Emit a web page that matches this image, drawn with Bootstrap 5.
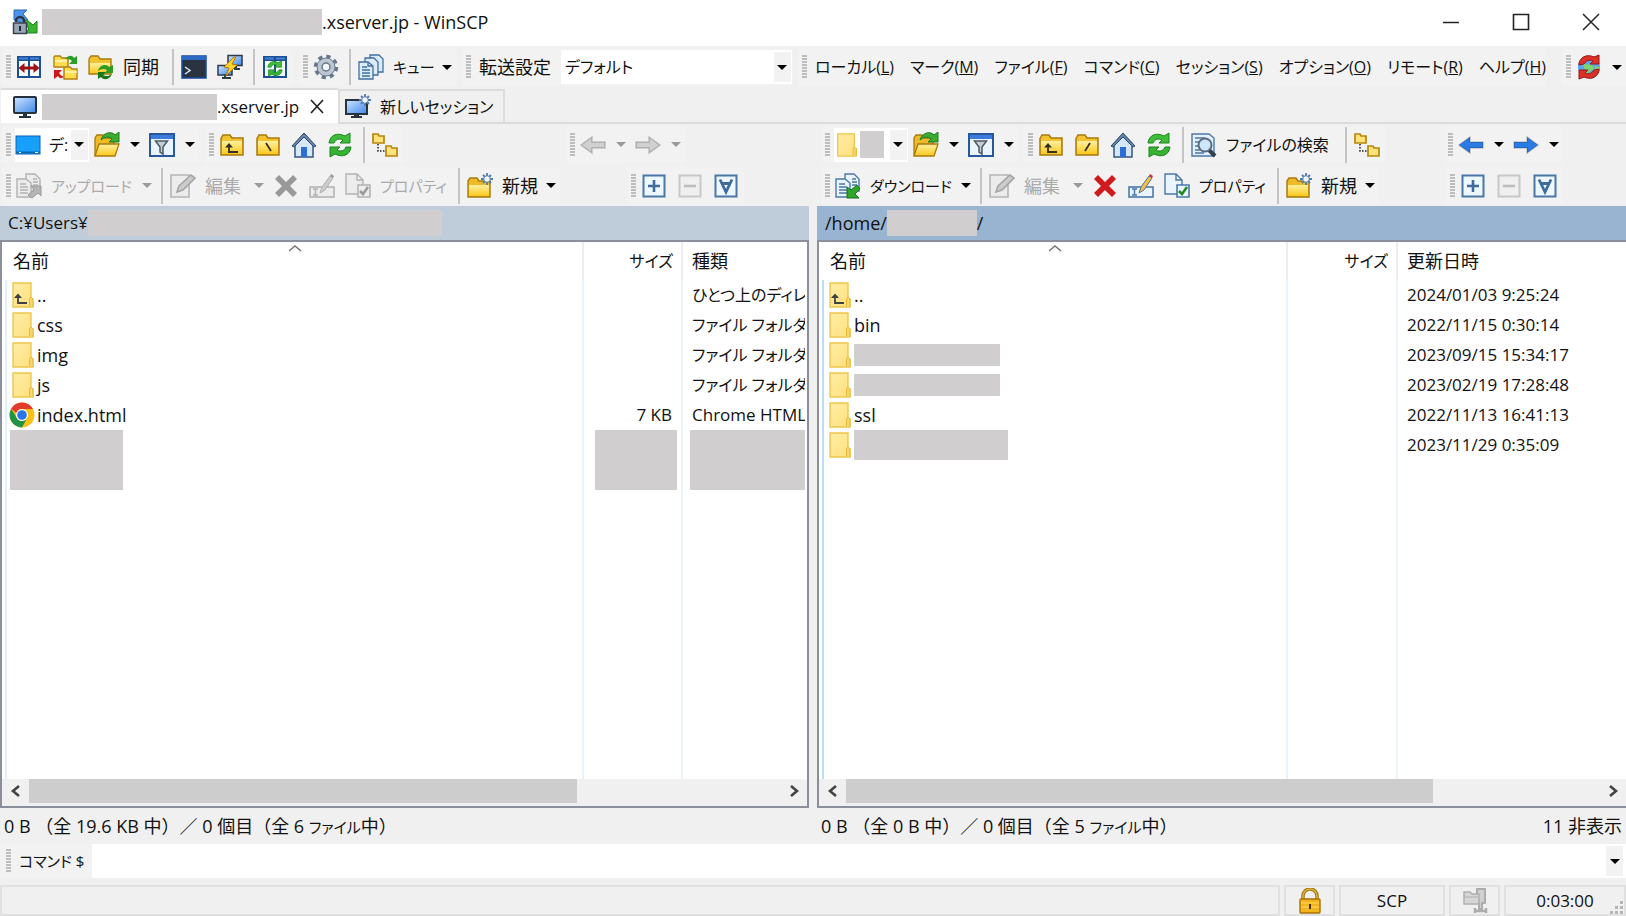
<!DOCTYPE html>
<html lang="ja">
<head>
<meta charset="utf-8">
<meta name="viewport" content="width=device-width, initial-scale=1">
<title>WinSCP</title>
<link href="https://cdn.jsdelivr.net/npm/bootstrap@5.3.0/dist/css/bootstrap.min.css" rel="stylesheet">
<style>
body{font-family:"Open Sans","Noto Sans CJK JP",sans-serif;font-size:17px;line-height:24px;color:#111;background:#f0f0f0;font-feature-settings:"palt"}
button,select,input{font:inherit;font-feature-settings:inherit;color:inherit;background:none;border:0;padding:0;margin:0;border-radius:0}
svg{display:block;flex:none}
a{color:inherit;text-decoration:none}
.ico{width:26px;height:26px}
.kana,.files th.kana{font-size:16px}
.kana-s{font-size:15px;font-feature-settings:"palt"}
.kanji{font-size:18px}
.redact{background:#d0cece;flex:none}
.titlebar{height:44px;margin-bottom:2px;background:#fff;padding-left:12px;gap:4px;font-size:18px;box-shadow:0 2px #fff}
.titlebar .redact{width:280px;height:26px}
.winbtn{width:70px;height:44px}
.toolrow{height:42px}
.bar{height:37px;background:#f2f2f2;padding-left:4px}
.first{margin-left:2px}
.grip{width:5px;height:24px;flex:none;background:repeating-linear-gradient(#bdbdbd 0 2px,#f2f2f2 2px 3px)}
.tb{width:36px;height:34px;flex:none;display:flex;align-items:center;justify-content:center}
.lab{display:flex;align-items:center;white-space:nowrap;height:34px;flex:none}
.lab:disabled,.tb:disabled{color:#aaa}
.w-s{width:48px}.w-n{width:43px}.w-m{width:77px}.w-l{width:90px}.w-xl{width:118px}
.pad{padding-left:4px}
.cv{width:19px;height:34px;flex:none;display:flex;align-items:center;justify-content:center}
.cv::after,.pick::after{content:"";border:5px solid transparent;border-top:5px solid #000;border-bottom:0}
.cv:disabled::after{border-top-color:#999}
.rule{width:2px;height:36px;background:#c4c4c4;margin:0 2px 0 5px;flex:none}
.pick{display:flex;align-items:center;background:linear-gradient(#f2f2f2,#f2f2f2) right 1px center/17px 30px no-repeat #fff;height:34px;padding-right:5px}
.pick select{appearance:none;outline:0}
.w-drive{width:25px}
.w-dir{width:9px;flex:1 1 auto}
.drv{width:24px;height:27px}
.menu{width:731px;font-size:16px}
.gap-a{margin-left:6px}
.tabstrip{height:36px;padding-left:1px}
.tab-on{width:337px;background:#fff;border-top:2px solid #dcdcdc;padding-left:11px;align-self:flex-start;height:35px}
.tab-on .redact{width:175px;height:26px}
.tab-rest{border-bottom:2px solid #dcdcdc}
.tab-new{height:33px;width:167px;border:2px solid #dcdcdc;border-bottom:0;padding-left:5px;gap:9px;white-space:nowrap}
.panes{display:grid;grid-template-columns:minmax(0,1fr) minmax(0,1fr);column-gap:8px}
.subrow{height:41px}
.tail{margin-left:auto}
.end-a{margin-right:124px}.end-b{margin-right:65px}.end-c{margin-right:63px}
.path{height:34px;padding-left:8px;white-space:nowrap}
.path-l{background:#bfcddb}.path-r{background:#99b4d1;font-size:18px}
.path-l .redact{width:354px;height:26px}.path-r .redact{width:90px;height:26px}
.list{background:#fff;border:2px solid #8a8f99;position:relative}
.rows{padding:0 2px 0 3px}
.files{width:100%;height:100%;table-layout:fixed;border-collapse:separate;border-spacing:0}
.files th{height:38px;font-weight:400;font-size:18px;padding:0 8px;border-right:2px solid #ededed;vertical-align:middle}
.files td{height:30px;padding:0 9px;border-right:2px solid #eaf3fd;white-space:nowrap;overflow:hidden}
.files th:last-child,.files td:last-child{border-right:0;padding-right:0}
.files th:last-child{padding-left:9px}
.files td:first-child{border-left:2px solid #e3effc;padding-left:2px}
.list-r .files td:first-child{border-left-color:#bcdcfa}
.files .tall{height:60px}
.files .fill td{height:100%}
.nm{display:flex;align-items:center;font-size:18px}
.nm .ico{width:28px}
.c-size{width:99px}.c-type{width:122px}.c-rsize{width:110px}.c-date{width:226px}
.block{height:60px;background:#d0cece}
.blk-n{width:113px;margin-left:1px}.blk-s{width:82px;margin-left:2px}.blk-t{margin-left:-2px}
.bk{width:146px;height:22px}.bk-l{width:154px;height:30px}
.sort{position:absolute;top:2px;left:286px}
.list-r .sort{left:229px}
.hbar{height:27px;background:#f0f0f0;padding-bottom:3px}
.hbar button{width:27px;height:24px;display:flex;align-items:center;justify-content:center}
.thumb{background:#cdcdcd;height:24px}
.foot{height:36px;padding:0 4px;font-size:18px;white-space:nowrap;font-feature-settings:normal}
.cmd{height:34px;padding-left:6px;background:#f2f2f2}
.cmd label{padding:0 8px;white-space:nowrap}
.cmd .field{background:#fff}
.cmd input{outline:0;height:34px}
.cmd .cv{background:#f2f2f2;height:30px;width:17px;margin-right:3px}
.status{height:31px;margin-top:7px;gap:4px}
.cell{border:2px solid #e0e0e0;display:flex;align-items:center;justify-content:center;flex:none}
.cell-i{width:51px}.cell-p{width:106px}.cell-t{width:122px;position:relative}
.size-grip{position:absolute;right:0;bottom:0}
.gray{color:#b3b3b3;--paper:#ececec;--pen:#ccc;--tip:#999;--chk:#999}
.tint{color:#4b78a8;--paper:#eaf4fd;--pen:#f5bd45;--tip:#c83030;--chk:#1e8a22}
</style>
</head>
<body>
<svg width="0" height="0" class="position-absolute" aria-hidden="true">
<defs>
<linearGradient id="gy" x2="0" y2="1"><stop offset="0" stop-color="#fff0a0"/><stop offset="1" stop-color="#fbc91c"/></linearGradient>
<linearGradient id="gb" x2="1" y2="1"><stop offset="0" stop-color="#cfe6ff"/><stop offset="1" stop-color="#3f87e8"/></linearGradient>
<linearGradient id="gf" x2="1" y2="1"><stop offset="0" stop-color="#ffeda6"/><stop offset="1" stop-color="#ffdf7c"/></linearGradient>
<symbol id="app" viewBox="0 0 26 26"><path d="M2 1h13l-4 4 5 6-4 4-10-4z" fill="#4d93ea" stroke="#2f66b5"/><path d="M12 12l3-1 6 5 4-4v12H13l4-4z" fill="#37b52d" stroke="#1f8420"/><path d="M4 13v-1a4 4 0 018 0v2" fill="none" stroke="#2c3440" stroke-width="2.400"/><rect x="1.500" y="14" width="13" height="10.500" fill="#9aa6b6" stroke="#38424f" stroke-width="1.500"/><path d="M7 17h2v5H7z" fill="#20262e"/></symbol>
<symbol id="win" viewBox="0 0 26 26"><rect x="1" y="2" width="24" height="22" fill="#1c4f93"/><rect x="3" y="7" width="9" height="15" fill="#f4faff"/><rect x="14" y="7" width="9" height="15" fill="#f4faff"/><path d="M3 3.500h9v2H3zM14 3.500h9v2h-9z" fill="#3f83dc"/></symbol>
<symbol id="cmp" viewBox="0 0 26 26"><use href="#win"/><path d="M2.500 14l6-5v3.500h9V9l6 5-6 5v-3.500h-9V19z" fill="#a11212"/></symbol>
<symbol id="fold" viewBox="0 0 26 26"><path d="M2 6.500L4 3h7l2 3h11v17H2z" fill="#f2c230" stroke="#a8790c" stroke-width="1.500"/><path d="M3 9h20v13H3z" fill="url(#gy)"/></symbol>
<symbol id="syncf" viewBox="0 0 26 26"><path d="M2 3l1-1h5l2 2h6v9H2zM12 14l1-1h5l2 2h5v10H12z" fill="#ffdc50" stroke="#b3800f" stroke-width="1.400"/><path d="M3 7h12M13 18h12" stroke="#fff0a8" stroke-width="2"/><path d="M13 5c4-4 7-4 9-1l3-2v8h-8l3-3c-2-2-4-2-7-2z" fill="#2b9e25"/><path d="M12 23c-3 2-5 1-6-1l-4 3v-9h8l-3 3c1 2 3 3 5 4z" fill="#cd1717"/></symbol>
<symbol id="sync1" viewBox="0 0 26 26"><path d="M1 5l2-3h7l2 3h11v15H1z" fill="#f2c230" stroke="#a8790c" stroke-width="1.300"/><path d="M2 9h20v10H2z" fill="url(#gy)"/><path d="M10 17c2-7 9-7 11-4l4-2v8h-8l2-3c-3-2-6-1-9 1z" fill="#2d9d22"/><path d="M24 20c-3 7-9 6-11 3l-3 2v-7h8l-3 3c4 2 6 1 9-1z" fill="#187818"/></symbol>
<symbol id="term" viewBox="0 0 26 26"><rect x="1" y="2" width="24" height="22" fill="#2a3440" stroke="#14499b" stroke-width="1.500"/><path d="M1 2h24v4H1z" fill="#2c68c5"/><path d="M4 13l5 3.500L4 20" fill="none" stroke="#dde6ef" stroke-width="1.500"/></symbol>
<symbol id="putty" viewBox="0 0 26 26"><g fill="url(#gb)" stroke="#2c3b4d" stroke-width="1.500"><rect x="11" y="1.500" width="14" height="10"/><rect x="1" y="11.500" width="14" height="9.500"/></g><path d="M5 24h9M8 21v3M17 15h6M19 12v3" stroke="#2c3b4d" stroke-width="2"/><path d="M17 3L7 13l5 1-3 8 11-11-5-1 4-7z" fill="#ffd22c" stroke="#b2790a"/></symbol>
<symbol id="rf" viewBox="0 0 26 26"><path d="M2 11C3 3 10 0 18 4l5-3v10H13l3-3c-4-2-7-1-9 3z" fill="#3fbd38" stroke="#1c8420"/><path d="M24 15c-1 8-8 11-16 7l-5 3V15h10l-3 3c4 2 7 1 9-3z" fill="#36b331" stroke="#1c8420"/></symbol>
<symbol id="wsync" viewBox="0 0 26 26"><use href="#win"/><svg x="4" y="6" width="18" height="17"><use href="#rf"/></svg></symbol>
<symbol id="gear" viewBox="0 0 26 26"><circle cx="13" cy="13" r="10.500" fill="none" stroke="#68788c" stroke-width="3.500" stroke-dasharray="4.250 4"/><circle cx="13" cy="13" r="9" fill="#bcc7d3" stroke="#68788c"/><circle cx="13" cy="13" r="4" fill="#f4f5f7" stroke="#68788c" stroke-width="1.500"/></symbol>
<symbol id="queue" viewBox="0 0 26 26"><g fill="#dcebf8" stroke="#416f9f" stroke-width="1.300"><path d="M12 1h9l4 4v13H12z"/><path d="M7 4h9l4 4v13H7z"/><path d="M1 8h9l5 4v13H1z"/></g><path d="M4 13h5M4 16h8M4 19h8M4 22h8M10 8v4h5" fill="none" stroke="#416f9f" stroke-width="1.300"/></symbol>
<symbol id="globe" viewBox="0 0 26 26"><circle cx="13" cy="13" r="11" fill="#5aa4f0"/><path d="M7 11c3-2 5 0 8 0s4 3 1 5-4 3-5 5M19 12l5 1-2 5-4 1z" fill="#7fd46b"/><path d="M3 9C5 2 12 0 18 3l5-2v9H14l3-3c-4-2-7 0-9 3l-5 1zM23 17c-2 7-9 9-15 6l-5 2v-9h9l-3 3c4 2 7 0 9-3l5-1z" fill="#dc3029" stroke="#941717"/></symbol>
<symbol id="pc" viewBox="0 0 26 26"><rect x="2" y="3" width="22" height="16" rx="1" fill="url(#gb)" stroke="#26333f" stroke-width="2"/><path d="M11 19h4v3h4v2H7v-2h4z" fill="#26333f"/></symbol>
<symbol id="spark" viewBox="0 0 12 12"><path d="M6 0v12M0 6h12M2 2l8 8M10 2l-8 8" stroke="#527ca8" stroke-width="1.800"/><circle cx="6" cy="6" r="3.300" fill="#eef6fd" stroke="#527ca8"/></symbol>
<symbol id="pcnew" viewBox="0 0 26 26"><path d="M1 6h21v14H1z" fill="url(#gb)" stroke="#26333f" stroke-width="2"/><path d="M9 20h5v2h3v2H6v-2h3z" fill="#26333f"/><svg x="14" y="0" width="12" height="12"><use href="#spark"/></svg></symbol>
<symbol id="desk" viewBox="0 0 26 26"><rect x="1" y="4" width="24" height="18" fill="#16a0fa" stroke="#0f63b3"/><path d="M1.500 19.500h23v2h-23z" fill="#0768b4"/><path d="M4 20.500h2M20 20.500h3" stroke="#fff"/></symbol>
<symbol id="open" viewBox="0 0 26 26"><path d="M1 23V6l2-3h6l2 3h9v17z" fill="#efba28" stroke="#a8790c" stroke-width="1.300"/><path d="M1 24l4-12h20l-4 12z" fill="url(#gy)" stroke="#a8790c" stroke-width="1.300"/><path d="M7 8c2-8 11-9 14-5l4-3v10H15l3-3c-4-3-7-2-11 1z" fill="#3cab31" stroke="#1c7c20"/></symbol>
<symbol id="filt" viewBox="0 0 26 26"><rect x="1" y="2" width="24" height="22" fill="#e9f4ff" stroke="#28579a" stroke-width="2"/><path d="M2 3h22v4H2z" fill="#3c7bdc"/><path d="M6.500 9h12l-4.500 6v7l-3-2v-5z" fill="#c8cdd2" stroke="#4d5964" stroke-width="1.500"/></symbol>
<symbol id="up" viewBox="0 0 26 26"><use href="#fold"/><path d="M10 14v6h9" fill="none" stroke="#332f22" stroke-width="1.800"/><path d="M6 15.500l4-4.500 4 4.500z" fill="#332f22"/></symbol>
<symbol id="rootl" viewBox="0 0 26 26"><use href="#fold"/><path d="M11 11l5 8" stroke="#332f22" stroke-width="1.800"/></symbol>
<symbol id="rootr" viewBox="0 0 26 26"><use href="#fold"/><path d="M16 11l-5 8" stroke="#332f22" stroke-width="1.800"/></symbol>
<symbol id="home" viewBox="0 0 26 26"><path d="M4 12L13 3l9 9v13H4z" fill="#d5e8fb" stroke="#355680" stroke-width="1.500"/><path d="M1 14L13 1l12 13-2 1L13 5 3 15z" fill="#6584aa" stroke="#2d4a70"/><path d="M10 15h6v10h-6z" fill="#2c6ed5"/></symbol>
<symbol id="tree" viewBox="0 0 26 26"><path d="M1 2h5l1 2h5v7H1zM14 14h5l1 2h5v8H14z" fill="#ffe37a" stroke="#b7860c" stroke-width="1.700"/><path d="M6 12v7h8" fill="none" stroke="#222" stroke-width="1.500" stroke-dasharray="1.500 1.500"/></symbol>
<symbol id="arL" viewBox="0 0 26 26"><path d="M1 13l11-8v5h13v6H12v5z" fill="currentColor" stroke="#000" stroke-opacity=".2" stroke-width="1.500"/></symbol>
<symbol id="arR" viewBox="0 0 26 26"><path d="M25 13L14 5v5H1v6h13v5z" fill="currentColor" stroke="#000" stroke-opacity=".2" stroke-width="1.500"/></symbol>
<symbol id="find" viewBox="0 0 26 26"><path d="M1 2h17l5 4v18H1z" fill="#e4f0fb" stroke="#4b78a8" stroke-width="1.400"/><path d="M4 6h10M4 10h5M4 14h4M4 18h5M4 21h9" stroke="#4b78a8" stroke-width="1.500"/><path d="M18 18l6 6" stroke="#333f4d" stroke-width="4"/><circle cx="14" cy="13" r="6.500" fill="#cfe6f9" stroke="#576c80" stroke-width="2"/></symbol>
<symbol id="docs" viewBox="0 0 26 26"><g stroke="currentColor" stroke-width="1.400" fill="var(--paper)"><path d="M10 1h9l5 5v12H10z"/><path d="M1 6h9l5 4v14H1z"/></g><path d="M4 11h6M4 14h8M4 17h8M4 20h8M17 6h4M17 9h5M17 12h5" stroke="currentColor" stroke-width="1.500"/></symbol>
<symbol id="upl" viewBox="0 0 26 26"><use href="#docs"/><path d="M25 13v10l-3-3-6 5-4-3 6-5-3-4z" fill="#b5b5b5" stroke="#999"/></symbol>
<symbol id="dl" viewBox="0 0 26 26"><use href="#docs"/><path d="M12 25V14l4 3 6-5 3 4-5 5 4 4z" fill="#2fa72b" stroke="#187319"/></symbol>
<symbol id="edit" viewBox="0 0 26 26"><path d="M1 2h18v22H1z" fill="#ececec" stroke="#b5b5b5" stroke-width="1.600"/><path d="M7 19l2-6L21 2l4 3-12 12z" fill="#ccc" stroke="#a5a5a5" stroke-width="1.600"/></symbol>
<symbol id="del" viewBox="0 0 26 26"><path d="M2 6l4-4 7 7 7-7 4 4-7 7 7 7-4 4-7-7-7 7-4-4 7-7z" fill="currentColor"/></symbol>
<symbol id="ren" viewBox="0 0 26 26"><rect x="1" y="14" width="24" height="10" fill="var(--paper)" stroke="currentColor" stroke-width="1.600"/><path d="M4 16h5M4 22h5M6.500 16v6" stroke="currentColor" stroke-width="1.500"/><path d="M11 20l2-6L21 3l3 2-8 12z" fill="var(--pen)" stroke="currentColor"/><path d="M21 3l1-2 3 2-1 2z" fill="var(--tip)"/></symbol>
<symbol id="prop" viewBox="0 0 26 26"><path d="M1 1h11l6 6v14H1zM12 1v6h6" fill="var(--paper)" stroke="currentColor" stroke-width="1.400"/><path d="M13 12h12v12H13z" fill="var(--paper)" stroke="currentColor" stroke-width="1.600"/><path d="M15 18l3 3 5-7" fill="none" stroke="var(--chk)" stroke-width="2.500"/></symbol>
<symbol id="new" viewBox="0 0 26 26"><path d="M1 8l2-3h7l2 3h11v16H1z" fill="#efba28" stroke="#a8790c" stroke-width="1.400"/><path d="M2 12h20v11H2z" fill="url(#gy)"/><svg x="14" y="0" width="12" height="12"><use href="#spark"/></svg></symbol>
<symbol id="plus" viewBox="0 0 26 26"><path d="M2.500 2.500h21v21h-21z" fill="#edf7ff" stroke="#4b76a5" stroke-width="2"/><path d="M13 7v12M7 13h12" stroke="#3f6b9c" stroke-width="2.600"/></symbol>
<symbol id="minus" viewBox="0 0 26 26"><path d="M2.500 2.500h21v21h-21z" fill="#efefef" stroke="#c8c8c8" stroke-width="2"/><path d="M7 13h12" stroke="#bdbdbd" stroke-width="2.600"/></symbol>
<symbol id="all" viewBox="0 0 26 26"><path d="M2.500 2.500h21v21h-21z" fill="#edf7ff" stroke="#4b76a5" stroke-width="2"/><path d="M7 6.500L13 19l6-12.500M8.500 10.500h9" fill="none" stroke="#3f6b9c" stroke-width="2.800"/></symbol>
<symbol id="dir" viewBox="0 0 28 26"><path d="M4 1h18v16h2v8H4z" fill="url(#gf)" stroke="#eec64c" stroke-width="1.400"/><path d="M20.500 24v-7l1.500-2 2 2v8" fill="#f7d56a" stroke="#e5b93b"/></symbol>
<symbol id="dirup" viewBox="0 0 28 26"><use href="#dir"/><path d="M9 15v6h9" fill="none" stroke="#3e4043" stroke-width="1.800"/><path d="M5 16l4-4.500 4 4.500z" fill="#3e4043"/></symbol>
<symbol id="chrome" viewBox="0 0 28 26"><circle cx="13" cy="13" r="12.500" fill="#fbbf16"/><path d="M2.200 6.800A12.500 12.500 0 0124 7H13a6 6 0 00-5.500 4z" fill="#e33b2e"/><path d="M2.200 6.800A12.500 12.500 0 0013 25.500l5.200-9.500A6 6 0 017.800 16z" fill="#1f9447"/><circle cx="13" cy="13" r="6" fill="#fff"/><circle cx="13" cy="13" r="4.800" fill="#2a75ec"/></symbol>
<symbol id="lock" viewBox="0 0 26 26"><path d="M6 12V8a7 7 0 0114 0v4" fill="none" stroke="#a87812" stroke-width="3.500"/><path d="M6 12V8a7 7 0 0114 0v4" fill="none" stroke="#e8bd48" stroke-width="1.200"/><rect x="3" y="11" width="20" height="14" rx="1" fill="#f3b51d" stroke="#a87208" stroke-width="1.400"/><path d="M4 15h18M4 19h18" stroke="#ffda60"/><path d="M12 16h2v5h-2z" fill="#47330a"/></symbol>
<symbol id="zip" viewBox="0 0 26 26"><path d="M15 1h8v14h-3v6h-3v-6h-2z" fill="#d0d0d0" stroke="#adadad" stroke-width="2"/><path d="M2 4h6l2 2h7v10H2z" fill="#d6d6d6" stroke="#b0b0b0" stroke-width="1.500"/><path d="M2 9h14" stroke="#b0b0b0"/><path d="M12 23h13M13 20v5M24 20v5" fill="none" stroke="#adadad" stroke-width="2.500"/></symbol>
</defs></svg>

<div class="d-flex flex-column vh-100 overflow-hidden">
<header class="titlebar d-flex align-items-center">
<svg class="ico"><use href="#app"/></svg>
<div class="d-flex align-items-center me-auto"><span class="redact"></span><span>.xserver.jp - WinSCP</span></div>
<div class="d-flex">
<button class="winbtn" aria-label="最小化"><svg class="m-auto" width="18" height="18"><path d="M1 9.500h16" stroke="#222" stroke-width="1.500"/></svg></button>
<button class="winbtn" aria-label="最大化"><svg class="m-auto" width="18" height="18"><path d="M1.500 1.500h15v15h-15z" fill="none" stroke="#222" stroke-width="1.600"/></svg></button>
<button class="winbtn" aria-label="閉じる"><svg class="m-auto" width="18" height="18"><path d="M1 1l16 16M17 1L1 17" stroke="#222" stroke-width="1.500"/></svg></button>
</div>
</header>

<div class="toolrow d-flex align-items-center">
<div class="bar first d-flex align-items-center"><span class="grip"></span>
<button class="tb" aria-label="比較"><svg class="ico"><use href="#cmp"/></svg></button><button class="tb" aria-label="同期閲覧"><svg class="ico"><use href="#syncf"/></svg></button><button class="tb" aria-label="ディレクトリ同期"><svg class="ico"><use href="#sync1"/></svg></button><button class="lab w-s pad kanji">同期</button><span class="rule"></span>
<button class="tb" aria-label="ターミナル"><svg class="ico"><use href="#term"/></svg></button><button class="tb" aria-label="PuTTY"><svg class="ico"><use href="#putty"/></svg></button><span class="rule"></span><button class="tb" aria-label="同期ブラウズ"><svg class="ico"><use href="#wsync"/></svg></button></div>
<div class="bar d-flex align-items-center gap-a"><span class="grip"></span><button class="tb" aria-label="環境設定"><svg class="ico"><use href="#gear"/></svg></button><span class="rule"></span><button class="tb" aria-label="キュー表示"><svg class="ico"><use href="#queue"/></svg></button><button class="lab w-s pad kana-s">キュー</button><button class="cv" aria-label="キューメニュー"></button></div>
<div class="bar d-flex align-items-center flex-grow-1 gap-a"><span class="grip"></span><label for="preset" class="lab w-l kanji ps-2">転送設定</label><div class="pick flex-grow-1 pad"><select id="preset" class="flex-grow-1 kana"><option>デフォルト</option></select></div></div>
<div class="bar d-flex align-items-center gap-a"><span class="grip"></span>
<nav class="menu d-flex justify-content-between ms-2 text-nowrap"><a href="#">ローカル(<u>L</u>)</a><a href="#">マーク(<u>M</u>)</a><a href="#">ファイル(<u>F</u>)</a><a href="#">コマンド(<u>C</u>)</a><a href="#">セッション(<u>S</u>)</a><a href="#">オプション(<u>O</u>)</a><a href="#">リモート(<u>R</u>)</a><a href="#">ヘルプ(<u>H</u>)</a></nav></div>
<div class="bar d-flex align-items-center ms-3"><span class="grip"></span><button class="tb" aria-label="更新の確認"><svg class="ico"><use href="#globe"/></svg></button><button class="cv" aria-label="更新メニュー"></button></div>
</div>

<div class="tabstrip d-flex">
<button class="tab-on d-flex align-items-center"><svg class="ico me-1"><use href="#pc"/></svg><span class="redact"></span><span>.xserver.jp</span><svg class="ms-2" width="20" height="18"><path d="M4 2l12 13M16 2L4 15" stroke="#222" stroke-width="1.700"/></svg></button>
<div class="tab-rest flex-grow-1 d-flex align-items-end"><button class="tab-new d-flex align-items-center kana"><svg class="ico"><use href="#pcnew"/></svg>新しいセッション</button></div>
</div>

<div class="panes flex-grow-1">
<section class="d-flex flex-column">
<div class="subrow d-flex align-items-center">
<div class="bar first d-flex align-items-center"><span class="grip"></span><div class="pick ms-1"><svg class="ico"><use href="#desk"/></svg><select class="kana ms-2 w-drive" aria-label="ドライブ"><option>デ:</option></select></div><button class="tb" aria-label="開く"><svg class="ico"><use href="#open"/></svg></button><button class="cv" aria-label="開くメニュー"></button><button class="tb" aria-label="フィルタ"><svg class="ico"><use href="#filt"/></svg></button><button class="cv" aria-label="フィルタメニュー"></button></div>
<div class="bar d-flex align-items-center gap-a"><span class="grip"></span><button class="tb" aria-label="上へ"><svg class="ico"><use href="#up"/></svg></button><button class="tb" aria-label="ルート"><svg class="ico"><use href="#rootl"/></svg></button><button class="tb" aria-label="ホーム"><svg class="ico"><use href="#home"/></svg></button><button class="tb" aria-label="更新"><svg class="ico"><use href="#rf"/></svg></button><span class="rule"></span><button class="tb" aria-label="ツリー"><svg class="ico"><use href="#tree"/></svg></button></div>
<div class="bar d-flex align-items-center tail end-a"><span class="grip"></span><button class="tb" disabled aria-label="戻る"><svg class="ico" color="#d0d0d0"><use href="#arL"/></svg></button><button class="cv" disabled aria-label="戻る履歴"></button><button class="tb" disabled aria-label="進む"><svg class="ico" color="#d0d0d0"><use href="#arR"/></svg></button><button class="cv" disabled aria-label="進む履歴"></button></div>
</div>
<div class="subrow d-flex align-items-center">
<div class="bar first d-flex align-items-center"><span class="grip"></span><button class="tb" disabled aria-label="アップロード"><svg class="ico gray"><use href="#upl"/></svg></button><button class="lab w-l pad kana-s" disabled>アップロード</button><button class="cv" disabled aria-label="アップロードメニュー"></button><span class="rule"></span><button class="tb" disabled aria-label="編集"><svg class="ico"><use href="#edit"/></svg></button><button class="lab w-s pad kanji" disabled>編集</button><button class="cv" disabled aria-label="編集メニュー"></button><button class="tb" disabled aria-label="削除"><svg class="ico" color="#999"><use href="#del"/></svg></button><button class="tb" disabled aria-label="名前の変更"><svg class="ico gray"><use href="#ren"/></svg></button><button class="tb" disabled aria-label="プロパティ"><svg class="ico gray"><use href="#prop"/></svg></button><button class="lab w-m pad kana-s" disabled>プロパティ</button><span class="rule"></span><button class="tb" aria-label="新規"><svg class="ico"><use href="#new"/></svg></button><button class="lab w-n pad kanji">新規</button><button class="cv" aria-label="新規メニュー"></button></div>
<div class="bar d-flex align-items-center tail end-b"><span class="grip"></span><button class="tb" aria-label="選択"><svg class="ico"><use href="#plus"/></svg></button><button class="tb" disabled aria-label="選択解除"><svg class="ico"><use href="#minus"/></svg></button><button class="tb" aria-label="すべて選択"><svg class="ico"><use href="#all"/></svg></button></div>
</div>
<div class="path path-l d-flex align-items-center"><span>C:¥Users¥</span><span class="redact"></span></div>
<div class="list flex-grow-1 d-flex flex-column">
<svg class="sort" width="14" height="9"><path d="M1 7l6-5 6 5" fill="none" stroke="#777" stroke-width="1.600"/></svg>
<div class="flex-grow-1 rows"><table class="files">
<colgroup><col><col class="c-size"><col class="c-type"></colgroup>
<thead><tr><th>名前</th><th class="text-end kana">サイズ</th><th>種類</th></tr></thead>
<tbody>
<tr><td><span class="nm"><svg class="ico"><use href="#dirup"/></svg>..</span></td><td></td><td class="kana">ひとつ上のディレ</td></tr>
<tr><td><span class="nm"><svg class="ico"><use href="#dir"/></svg>css</span></td><td></td><td class="kana">ファイル フォルダ</td></tr>
<tr><td><span class="nm"><svg class="ico"><use href="#dir"/></svg>img</span></td><td></td><td class="kana">ファイル フォルダ</td></tr>
<tr><td><span class="nm"><svg class="ico"><use href="#dir"/></svg>js</span></td><td></td><td class="kana">ファイル フォルダ</td></tr>
<tr><td><span class="nm"><svg class="ico"><use href="#chrome"/></svg>index.html</span></td><td class="text-end">7 KB</td><td>Chrome HTML</td></tr>
<tr><td class="tall"><div class="block blk-n"></div></td><td><div class="block blk-s"></div></td><td><div class="block blk-t"></div></td></tr>
<tr class="fill"><td></td><td></td><td></td></tr>
</tbody></table></div>
<div class="hbar d-flex"><button aria-label="左へスクロール"><svg width="12" height="14"><path d="M9 2L3 7l6 5" fill="none" stroke="#444" stroke-width="2.600"/></svg></button><div class="flex-grow-1"><div class="thumb" style="width:73%"></div></div><button aria-label="右へスクロール"><svg width="12" height="14"><path d="M3 2l6 5-6 5" fill="none" stroke="#444" stroke-width="2.600"/></svg></button></div>
</div>
<div class="foot d-flex align-items-center"><span>0 B （全 19.6 KB 中）／ 0 個目（全 6 <span class="kana-s">ファイル</span>中）</span></div>
</section>

<section class="d-flex flex-column">
<div class="subrow d-flex align-items-center">
<div class="bar ms-1 d-flex align-items-center"><span class="grip"></span><div class="pick ms-1"><svg class="ico"><use href="#dir"/></svg><span class="redact drv"></span><select class="w-dir" aria-label="ディレクトリ"><option></option></select></div><button class="tb" aria-label="開く"><svg class="ico"><use href="#open"/></svg></button><button class="cv" aria-label="開くメニュー"></button><button class="tb" aria-label="フィルタ"><svg class="ico"><use href="#filt"/></svg></button><button class="cv" aria-label="フィルタメニュー"></button></div>
<div class="bar d-flex align-items-center gap-a"><span class="grip"></span><button class="tb" aria-label="上へ"><svg class="ico"><use href="#up"/></svg></button><button class="tb" aria-label="ルート"><svg class="ico"><use href="#rootr"/></svg></button><button class="tb" aria-label="ホーム"><svg class="ico"><use href="#home"/></svg></button><button class="tb" aria-label="更新"><svg class="ico"><use href="#rf"/></svg></button><span class="rule"></span><button class="tb" aria-label="検索"><svg class="ico"><use href="#find"/></svg></button><button class="lab w-xl pad kana">ファイルの検索</button><span class="rule"></span><button class="tb" aria-label="ツリー"><svg class="ico"><use href="#tree"/></svg></button></div>
<div class="bar d-flex align-items-center tail end-c"><span class="grip"></span><button class="tb" aria-label="戻る"><svg class="ico" color="#2b7be4"><use href="#arL"/></svg></button><button class="cv" aria-label="戻る履歴"></button><button class="tb" aria-label="進む"><svg class="ico" color="#2b7be4"><use href="#arR"/></svg></button><button class="cv" aria-label="進む履歴"></button></div>
</div>
<div class="subrow d-flex align-items-center">
<div class="bar ms-1 d-flex align-items-center"><span class="grip"></span><button class="tb" aria-label="ダウンロード"><svg class="ico tint"><use href="#dl"/></svg></button><button class="lab w-l pad kana-s">ダウンロード</button><button class="cv" aria-label="ダウンロードメニュー"></button><span class="rule"></span><button class="tb" disabled aria-label="編集"><svg class="ico"><use href="#edit"/></svg></button><button class="lab w-s pad kanji" disabled>編集</button><button class="cv" disabled aria-label="編集メニュー"></button><button class="tb" aria-label="削除"><svg class="ico" color="#cf1b1b"><use href="#del"/></svg></button><button class="tb" aria-label="名前の変更"><svg class="ico tint"><use href="#ren"/></svg></button><button class="tb" aria-label="プロパティ"><svg class="ico tint"><use href="#prop"/></svg></button><button class="lab w-m pad kana-s">プロパティ</button><span class="rule"></span><button class="tb" aria-label="新規"><svg class="ico"><use href="#new"/></svg></button><button class="lab w-n pad kanji">新規</button><button class="cv" aria-label="新規メニュー"></button></div>
<div class="bar d-flex align-items-center tail end-c"><span class="grip"></span><button class="tb" aria-label="選択"><svg class="ico"><use href="#plus"/></svg></button><button class="tb" disabled aria-label="選択解除"><svg class="ico"><use href="#minus"/></svg></button><button class="tb" aria-label="すべて選択"><svg class="ico"><use href="#all"/></svg></button></div>
</div>
<div class="path path-r d-flex align-items-center"><span>/home/</span><span class="redact"></span><span>/</span></div>
<div class="list list-r flex-grow-1 d-flex flex-column border-end-0">
<svg class="sort" width="14" height="9"><path d="M1 7l6-5 6 5" fill="none" stroke="#777" stroke-width="1.600"/></svg>
<div class="flex-grow-1 rows"><table class="files">
<colgroup><col><col class="c-rsize"><col class="c-date"></colgroup>
<thead><tr><th>名前</th><th class="text-end kana">サイズ</th><th>更新日時</th></tr></thead>
<tbody>
<tr><td><span class="nm"><svg class="ico"><use href="#dirup"/></svg>..</span></td><td></td><td>2024/01/03 9:25:24</td></tr>
<tr><td><span class="nm"><svg class="ico"><use href="#dir"/></svg>bin</span></td><td></td><td>2022/11/15 0:30:14</td></tr>
<tr><td><span class="nm"><svg class="ico"><use href="#dir"/></svg><span class="redact bk"></span></span></td><td></td><td>2023/09/15 15:34:17</td></tr>
<tr><td><span class="nm"><svg class="ico"><use href="#dir"/></svg><span class="redact bk"></span></span></td><td></td><td>2023/02/19 17:28:48</td></tr>
<tr><td><span class="nm"><svg class="ico"><use href="#dir"/></svg>ssl</span></td><td></td><td>2022/11/13 16:41:13</td></tr>
<tr><td><span class="nm"><svg class="ico"><use href="#dir"/></svg><span class="redact bk-l"></span></span></td><td></td><td>2023/11/29 0:35:09</td></tr>
<tr class="fill"><td></td><td></td><td></td></tr>
</tbody></table></div>
<div class="hbar d-flex"><button aria-label="左へスクロール"><svg width="12" height="14"><path d="M9 2L3 7l6 5" fill="none" stroke="#444" stroke-width="2.600"/></svg></button><div class="flex-grow-1"><div class="thumb" style="width:78%"></div></div><button aria-label="右へスクロール"><svg width="12" height="14"><path d="M3 2l6 5-6 5" fill="none" stroke="#444" stroke-width="2.600"/></svg></button></div>
</div>
<div class="foot d-flex align-items-center justify-content-between"><span>0 B （全 0 B 中）／ 0 個目（全 5 <span class="kana-s">ファイル</span>中）</span><span>11 非表示</span></div>
</section>
</div>

<div class="cmd d-flex align-items-center"><span class="grip"></span><label for="cmd" class="kana-s">コマンド $</label><div class="field d-flex flex-grow-1 align-items-center"><input id="cmd" type="text" class="flex-grow-1"><button class="cv" aria-label="履歴"></button></div></div>
<footer class="status d-flex"><div class="cell flex-grow-1"></div><div class="cell cell-i"><svg class="ico"><use href="#lock"/></svg></div><div class="cell cell-p">SCP</div><div class="cell cell-i"><svg class="ico"><use href="#zip"/></svg></div><div class="cell cell-t">0:03:00<svg class="size-grip" width="14" height="14" fill="#b5b5b5"><path d="M10 1h3v3h-3zM5 6h3v3H5zM10 6h3v3h-3zM0 11h3v3H0zM5 11h3v3H5zM10 11h3v3h-3z"/></svg></div></footer>
</div>
<script src="https://cdn.jsdelivr.net/npm/bootstrap@5.3.0/dist/js/bootstrap.bundle.min.js"></script>
</body>
</html>
